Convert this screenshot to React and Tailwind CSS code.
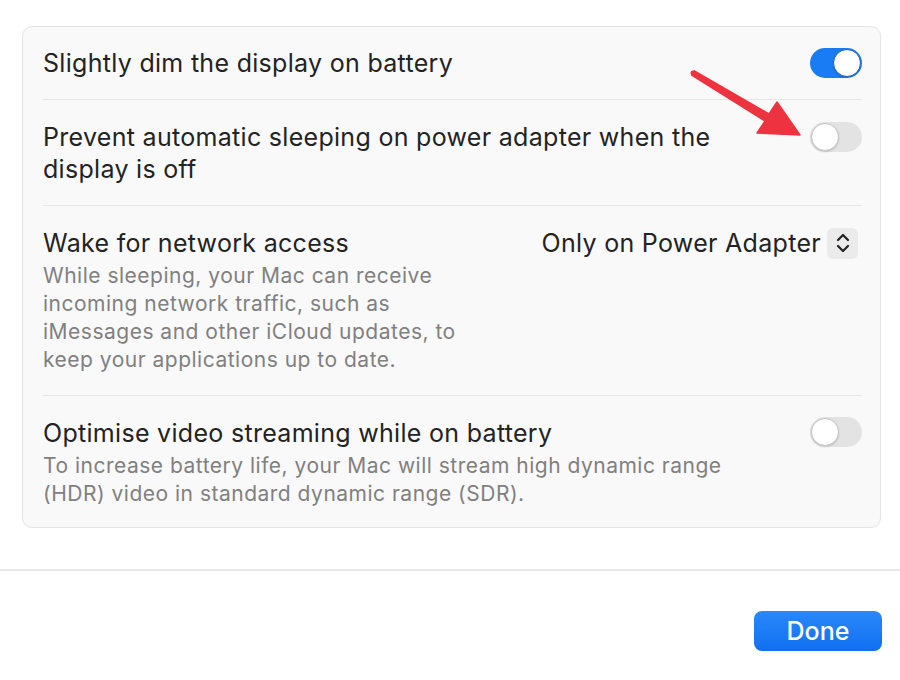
import React from 'react';

const Toggle = ({ on }) => (
  <div
    className={`relative w-[52px] h-[30px] rounded-full shrink-0 ${
      on ? 'bg-[#1a7cf5]' : 'bg-[#e3e3e3]'
    }`}
  >
    <div
      className={`absolute top-[1px] w-[28px] h-[28px] rounded-full bg-white border ${
        on ? 'right-[1px] border-[#1f5fb8]' : 'left-[1px] border-[#c4c4c4]'
      } shadow-[0_1px_2px_rgba(0,0,0,0.15)]`}
    />
  </div>
);

const Stepper = () => (
  <div className="w-[31px] h-[31px] rounded-[6px] bg-[#ebebeb] flex items-center justify-center">
    <svg width="16" height="22" viewBox="0 0 16 22" fill="none" stroke="#222" strokeWidth="2.2" strokeLinecap="round" strokeLinejoin="round">
      <path d="M3 8 L8 3 L13 8" />
      <path d="M3 14 L8 19 L13 14" />
    </svg>
  </div>
);

const Arrow = () => (
  <svg className="absolute left-0 top-0 pointer-events-none" width="900" height="680" viewBox="0 0 900 680">
    <polygon
      points="694.3,70.8 769,114 777,102 800,135 757,133 765,121 691.7,75.2"
      fill="#ee3340"
      strokeLinejoin="round"
      stroke="#ee3340"
      strokeWidth="1.5"
    />
    <circle cx="693" cy="73" r="2.5" fill="#ee3340" />
  </svg>
);

export default function App() {
  return (
    <div className="relative w-[900px] h-[680px] bg-white font-['Inter','Liberation_Sans',sans-serif] text-[#232323]">
      <div className="pt-[26px] pl-[22px]">
        <div className="w-[859px] rounded-[10px] border border-[#e4e4e4] bg-[#f9f9f9] pl-5 pr-[18px]">
          <div className="flex items-center justify-between py-5 border-b border-[#e6e6e6]">
            <span className="text-[25px] leading-[32px] tracking-[0.3px]">Slightly dim the display on battery</span>
            <Toggle on />
          </div>
          <div className="flex items-start justify-between pt-[21px] pb-[20px] border-b border-[#e6e6e6]">
            <span className="text-[25px] leading-[32px] tracking-[0.3px]">
              Prevent automatic sleeping on power adapter when the
              <br />
              display is off
            </span>
            <div className="pt-[1px]">
              <Toggle />
            </div>
          </div>
          <div className="flex items-start justify-between pt-[21px] pb-[21px] border-b border-[#e6e6e6]">
            <div>
              <div className="text-[25px] leading-[32px] tracking-[0.3px]">Wake for network access</div>
              <div className="mt-[3px] text-[21px] leading-[28px] tracking-[0.5px] text-[#808080]">
                While sleeping, your Mac can receive
                <br />
                incoming network traffic, such as
                <br />
                iMessages and other iCloud updates, to
                <br />
                keep your applications up to date.
              </div>
            </div>
            <div className="flex items-center gap-[6px] pr-[4px]">
              <span className="text-[25px] leading-[32px] tracking-[0.3px]">Only on Power Adapter</span>
              <Stepper />
            </div>
          </div>
          <div className="flex items-start justify-between pt-[21px] pb-[19px]">
            <div>
              <div className="text-[25px] leading-[32px] tracking-[0.3px]">Optimise video streaming while on battery</div>
              <div className="mt-[3px] text-[21px] leading-[28px] tracking-[0.5px] text-[#808080]">
                To increase battery life, your Mac will stream high dynamic range
                <br />
                (HDR) video in standard dynamic range (SDR).
              </div>
            </div>
            <Toggle />
          </div>
        </div>
      </div>
      <div className="mt-[41px] h-[2px] bg-[#e6e6e6]" />
      <div className="flex justify-end pr-[18px] pt-[40px]">
        <button className="w-[128px] h-[40px] rounded-[8px] bg-gradient-to-b from-[#2a88fa] to-[#0f6ff0] text-white text-[25px] font-medium leading-none">
          Done
        </button>
      </div>
      <Arrow />
    </div>
  );
}
